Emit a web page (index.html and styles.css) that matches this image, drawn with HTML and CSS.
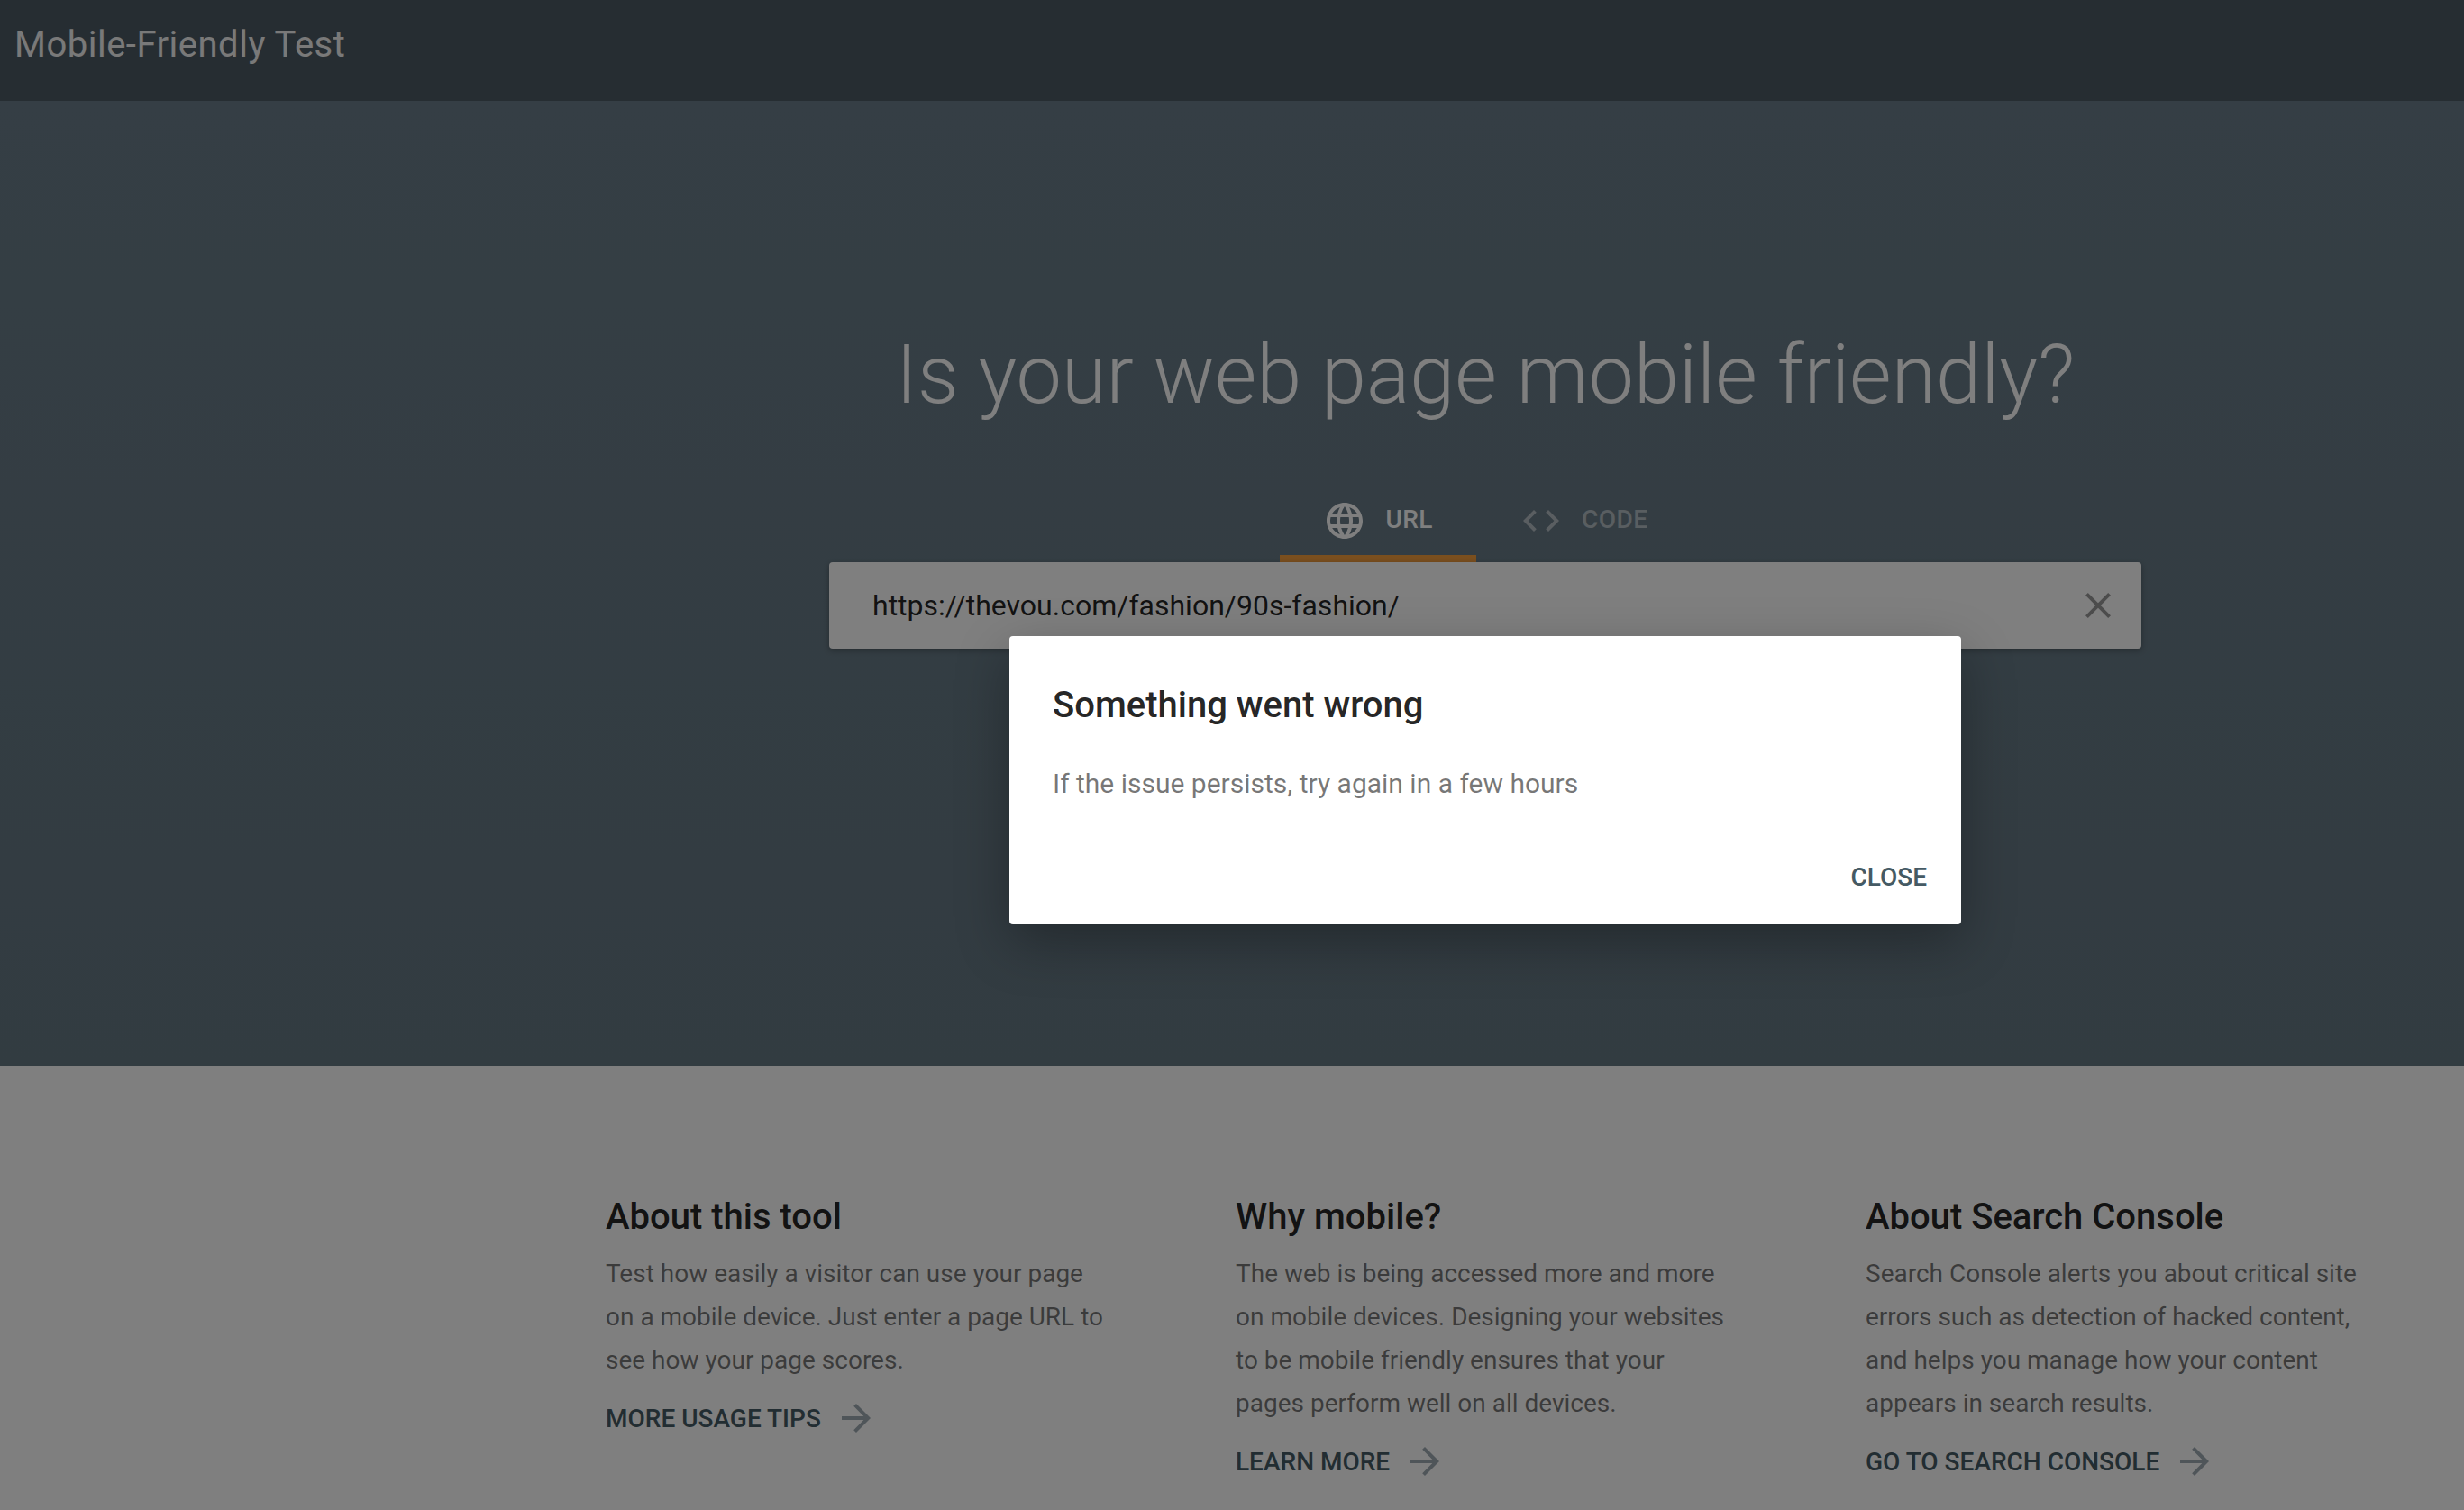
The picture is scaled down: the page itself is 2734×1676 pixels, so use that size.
FILE: index.html
```html
<!DOCTYPE html>
<html lang="en">
<head>
<meta charset="utf-8">
<title>Mobile-Friendly Test</title>
<link rel="stylesheet" href="styles.css">
</head>
<body>
<div class="page">
  <header class="topbar"><span class="brand">Mobile-Friendly Test</span></header>
  <section class="hero">
    <h1 class="headline">Is your web page mobile friendly?</h1>
    <div class="tabs">
      <div class="tab tab-active">
        <svg class="icon" viewBox="0 0 24 24"><path d="M11.99 2C6.47 2 2 6.48 2 12s4.47 10 9.99 10C17.52 22 22 17.52 22 12S17.52 2 11.99 2zm6.93 6h-2.95c-.32-1.25-.78-2.45-1.38-3.56 1.84.63 3.37 1.91 4.33 3.56zM12 4.04c.83 1.2 1.48 2.53 1.91 3.96h-3.82c.43-1.43 1.08-2.76 1.91-3.96zM4.26 14C4.1 13.36 4 12.69 4 12s.1-1.36.26-2h3.38c-.08.66-.14 1.32-.14 2 0 .68.06 1.34.14 2H4.26zm.82 2h2.95c.32 1.25.78 2.45 1.38 3.56-1.84-.63-3.37-1.9-4.33-3.56zm2.95-8H5.08c.96-1.66 2.49-2.93 4.33-3.56C8.81 5.55 8.35 6.75 8.03 8zM12 19.96c-.83-1.2-1.48-2.53-1.91-3.96h3.82c-.43 1.43-1.08 2.76-1.91 3.96zM14.34 14H9.66c-.09-.66-.16-1.32-.16-2 0-.68.07-1.35.16-2h4.68c.09.65.16 1.32.16 2 0 .68-.07 1.34-.16 2zm.25 5.56c.6-1.11 1.06-2.31 1.38-3.56h2.95c-.96 1.65-2.49 2.93-4.33 3.56zM16.36 14c.08-.66.14-1.32.14-2 0-.68-.06-1.34-.14-2h3.38c.16.64.26 1.31.26 2s-.1 1.36-.26 2h-3.38z"/></svg>
        <span class="tab-label">URL</span>
      </div>
      <div class="tab">
        <svg class="icon" viewBox="0 0 24 24"><path d="M9.4 16.6L4.8 12l4.6-4.6L8 6l-6 6 6 6 1.4-1.4zm5.2 0l4.6-4.6-4.6-4.6L16 6l6 6-6 6-1.4-1.4z"/></svg>
        <span class="tab-label">CODE</span>
      </div>
    </div>
    <div class="search">
      <span class="search-text">https://thevou.com/fashion/90s-fashion/</span>
      <svg class="icon search-clear" viewBox="0 0 24 24"><path d="M19 6.41L17.59 5 12 10.59 6.41 5 5 6.41 10.59 12 5 17.59 6.41 19 12 13.41 17.59 19 19 17.59 13.41 12 19 6.41z"/></svg>
    </div>
  </section>
  <section class="info">
    <article class="col">
      <h2 class="col-title">About this tool</h2>
      <p class="col-text">Test how easily a visitor can use your page on a mobile device. Just enter a page URL to see how your page scores.</p>
      <a class="col-link">MORE USAGE TIPS<svg class="icon link-arrow" viewBox="0 0 24 24"><path d="M12 4l-1.41 1.41L16.17 11H4v2h12.17l-5.58 5.59L12 20l8-8z"/></svg></a>
    </article>
    <article class="col">
      <h2 class="col-title">Why mobile?</h2>
      <p class="col-text">The web is being accessed more and more on mobile devices. Designing your websites to be mobile friendly ensures that your pages perform well on all devices.</p>
      <a class="col-link">LEARN MORE<svg class="icon link-arrow" viewBox="0 0 24 24"><path d="M12 4l-1.41 1.41L16.17 11H4v2h12.17l-5.58 5.59L12 20l8-8z"/></svg></a>
    </article>
    <article class="col">
      <h2 class="col-title">About Search Console</h2>
      <p class="col-text">Search Console alerts you about critical site errors such as detection of hacked content, and helps you manage how your content appears in search results.</p>
      <a class="col-link">GO TO SEARCH CONSOLE<svg class="icon link-arrow" viewBox="0 0 24 24"><path d="M12 4l-1.41 1.41L16.17 11H4v2h12.17l-5.58 5.59L12 20l8-8z"/></svg></a>
    </article>
  </section>
  <div class="scrim"></div>
  <div class="dialog">
    <h3 class="dialog-title">Something went wrong</h3>
    <p class="dialog-text">If the issue persists, try again in a few hours</p>
    <div class="dialog-actions"><button class="dialog-btn">CLOSE</button></div>
  </div>
</div>
</body>
</html>
```
FILE: styles.css
```css
* { box-sizing: border-box; }
html, body { margin: 0; padding: 0; }
body { font-family: Roboto, "Noto Sans", sans-serif; background: #fff; }
.page { position: relative; width: 2734px; height: 1676px; overflow: hidden; display: flex; flex-direction: column; }

.topbar { height: 112px; flex: none; background: #4c5a64; display: flex; padding: 24px 16px 0; }
.brand { font-size: 40px; line-height: 52px; letter-spacing: .5px; color: #f2f2f2; font-weight: 400; }

.hero { height: 1071px; flex: none; background: linear-gradient(#6a7d8a, #657883); padding: 0 0 0 562px; display: flex; flex-direction: column; align-items: center; }
.headline { margin: 0; padding-top: 252px; font-size: 90px; line-height: 106px; font-weight: 300; color: #fff; height: 358px; }
.tabs { display: flex; margin-top: 58px; margin-left: 1px; height: 96px; padding-top: 12px; }
.tab { display: flex; align-items: center; gap: 21px; padding: 0 48px; border-bottom: 8px solid transparent; font-size: 28px; font-weight: 500; letter-spacing: .5px; color: rgba(255,255,255,.5); }
.tab-label { padding-bottom: 4px; }
.tab-active { border-bottom-color: #f59e3d; color: #fff; }
.icon { width: 48px; height: 48px; flex: none; fill: currentColor; display: block; }

.search { width: 1456px; height: 96px; flex: none; background: #fff; border-radius: 4px; box-shadow: 0 2px 6px rgba(0,0,0,.3); padding: 0 24px 0 48px; display: flex; align-items: center; justify-content: space-between; }
.search-text { font-size: 32px; color: rgba(0,0,0,.87); }
.search-clear { color: rgba(0,0,0,.4); }

.info { flex: 1; background: #fff; padding: 144px 0 0 672px; display: grid; grid-template-columns: repeat(3, 555px); column-gap: 144px; align-content: start; align-items: start; }
.col-title { margin: 0 0 15px; font-size: 40px; line-height: 48px; font-weight: 500; color: rgba(0,0,0,.87); }
.col-text { margin: 0; font-size: 28px; line-height: 48px; color: rgba(0,0,0,.54); }
.col-link { display: flex; align-items: center; height: 48px; margin-top: 16px; font-size: 28px; font-weight: 500; color: #455a64; }
.link-arrow { margin-left: 15px; color: #9fabb2; }

.scrim { position: absolute; inset: 0; background: rgba(0,0,0,.5); }
.dialog { position: absolute; left: 1120px; top: 706px; width: 1056px; height: 320px; background: #fff; border-radius: 4px; box-shadow: 0 20px 60px rgba(0,0,0,.3); padding: 52px 38px 0 48px; display: flex; flex-direction: column; }
.dialog-title { margin: 0; font-size: 40px; line-height: 50px; font-weight: 500; color: rgba(0,0,0,.87); }
.dialog-text { margin: 38px 0 0; font-size: 30px; line-height: 48px; color: rgba(0,0,0,.54); }
.dialog-actions { display: flex; justify-content: flex-end; margin-top: 56px; }
.dialog-btn { border: 0; padding: 0; background: none; font: 500 28px/48px Roboto, sans-serif; color: #455a64; }
```
